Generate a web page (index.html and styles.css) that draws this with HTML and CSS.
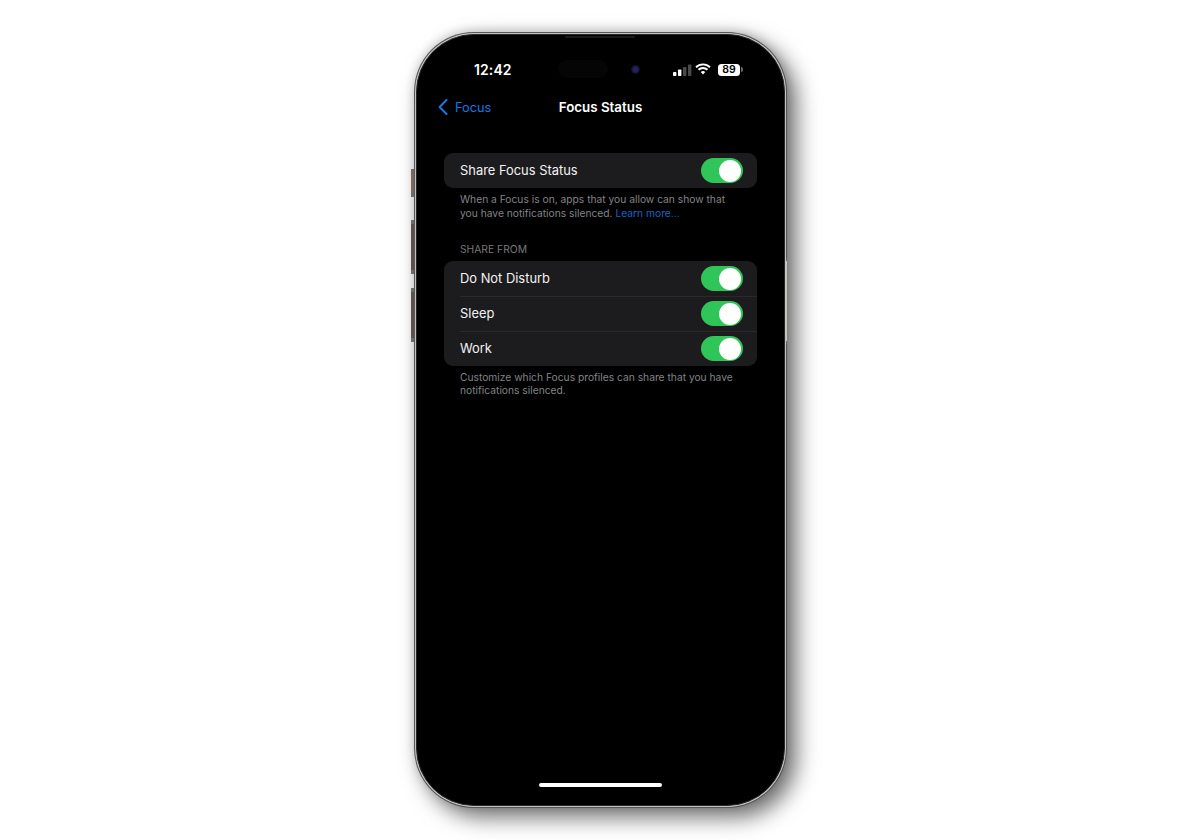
FILE: index.html
```html
<!DOCTYPE html>
<html lang="en">
<head>
<meta charset="utf-8">
<title>Focus Status</title>
<link rel="stylesheet" href="styles.css">
</head>
<body>
<div class="phone">
  <span class="btn btn-mute"></span>
  <span class="btn btn-up"></span>
  <span class="btn btn-down"></span>
  <span class="btn btn-power"></span>
  <div class="bezel">
    <div class="screen">
      <span class="speaker"></span>
      <div class="status">
        <span class="time">12:42</span>
        <div class="island"><span class="pill"></span><span class="cam"></span></div>
        <div class="indicators">
          <svg class="signal" width="19" height="12" viewBox="0 0 19 12"><rect x="0" y="8" width="3.4" height="4" rx="0.8" fill="#fff"/><rect x="5" y="5.5" width="3.4" height="6.5" rx="0.8" fill="#fff"/><rect x="10" y="3" width="3.4" height="9" rx="0.8" fill="#4a4a4c"/><rect x="15" y="0.5" width="3.4" height="11.5" rx="0.8" fill="#4a4a4c"/></svg>
          <svg class="wifi" width="16" height="12" viewBox="0 0 16 12"><path d="M1 4.2a10 10 0 0 1 14 0M3.5 6.8a6.4 6.4 0 0 1 9 0" fill="none" stroke="#fff" stroke-width="1.9"/><path d="M8 11.6 5.7 9.1a3.2 3.2 0 0 1 4.6 0z" fill="#fff"/></svg>
          <div class="battery"><span class="level">89</span><span class="nub"></span></div>
        </div>
      </div>
      <div class="nav">
        <div class="back">
          <svg width="10" height="16" viewBox="0 0 10 16"><path d="M8.5 1 1.6 8l6.9 7" fill="none" stroke="#1c74e0" stroke-width="2" stroke-linecap="round" stroke-linejoin="round"/></svg>
          <span>Focus</span>
        </div>
        <div class="title">Focus Status</div>
      </div>
      <div class="content">
        <div class="card">
          <div class="row"><span>Share Focus Status</span><span class="toggle"><i></i></span></div>
        </div>
        <p class="note">When a Focus is on, apps that you allow can show that you have notifications silenced. <span class="link">Learn more...</span></p>
        <div class="section">SHARE FROM</div>
        <div class="card">
          <div class="row"><span>Do Not Disturb</span><span class="toggle"><i></i></span></div>
          <div class="row"><span>Sleep</span><span class="toggle"><i></i></span></div>
          <div class="row"><span>Work</span><span class="toggle"><i></i></span></div>
        </div>
        <p class="note note-low">Customize which Focus profiles can share that you have notifications silenced.</p>
      </div>
      <div class="home"></div>
    </div>
  </div>
</div>
</body>
</html>
```
FILE: styles.css
```css
* { box-sizing: border-box; }
html, body { margin: 0; height: 840px; overflow: hidden; background: #fff; }
body {
  display: flex;
  justify-content: center;
  padding-top: 32px;
  font-family: Inter, "Liberation Sans", sans-serif;
}
.phone {
  position: relative;
  width: 373px;
  height: 776px;
  margin-left: 1px;
  padding: 1px;
  border-radius: 60px;
  background: #555;
  box-shadow: 9px 9px 22px rgba(0,0,0,.58), 0 -2px 10px rgba(0,0,0,.14);
}
.btn {
  position: absolute;
  width: 3px;
  background: #5e514c;
  border-top: 4px solid #6b6b6b;
  border-bottom: 4px solid #6b6b6b;
}
.btn-mute { left: -3px; top: 137px; height: 28px; background: #7b6a5c; }
.btn-up { left: -3px; top: 188px; height: 54px; }
.btn-down { left: -3px; top: 256px; height: 54px; }
.btn-power { right: 0; top: 226px; width: 1px; height: 86px; border-width: 3px 0; background: #c8c3b4; }
.bezel {
  height: 100%;
  padding: 1px;
  border-radius: 59px;
  background: #c4c4c4;
}
.screen {
  display: flex;
  flex-direction: column;
  position: relative;
  height: 100%;
  border-radius: 58px;
  border: 1px solid #262626;
  background: #000;
  color: #fff;
  overflow: hidden;
}
.speaker {
  position: absolute;
  left: 148px;
  top: 1px;
  width: 70px;
  height: 2px;
  border-radius: 1px;
  background: #1a1a1a;
}
.status {
  display: flex;
  align-items: center;
  height: 22px;
  margin-top: 23px;
  padding-left: 57px;
}
.time { width: 84px; font-size: 14px; font-weight: 600; letter-spacing: .1px; }
.island { display: flex; align-items: center; gap: 23px; }
.pill { width: 50px; height: 18px; border-radius: 9px; background: #050505; }
.cam {
  width: 9px;
  height: 9px;
  border-radius: 50%;
  background: radial-gradient(circle, #23235a 0 35%, #101030 60%, #060612 100%);
}
.indicators { display: flex; align-items: center; margin-left: 33px; }
.signal { margin-top: 1px; }
.wifi { margin-left: 3px; }
.battery {
  display: flex;
  align-items: center;
  margin-top: 1px;
  margin-left: 7px;
}
.level {
  width: 22px;
  height: 12px;
  border-radius: 3.5px;
  background: #fff;
  color: #000;
  font-size: 10.5px;
  font-weight: 600;
  line-height: 12px;
  text-align: center;
}
.nub { width: 2px; height: 5px; margin-left: 1px; border-radius: 0 2px 2px 0; background: #6a6a6a; }
.nav {
  position: relative;
  display: flex;
  justify-content: center;
  align-items: center;
  height: 20px;
  margin-top: 17px;
}
.back {
  position: absolute;
  left: 21px;
  top: 0;
  display: flex;
  align-items: center;
  gap: 7px;
  height: 20px;
  color: #1c74e0;
  font-size: 12.8px;
}
.title { font-size: 13.35px; font-weight: 600; }
.content { padding: 36px 27px 0; }
.card { border-radius: 9px; background: #1c1c1e; }
.row {
  position: relative;
  display: flex;
  justify-content: space-between;
  align-items: center;
  height: 35px;
  padding: 0 14px 0 16px;
  font-size: 12.9px;
  color: #f2f2f2;
}
.row + .row::before {
  content: "";
  position: absolute;
  left: 16px;
  right: 0;
  top: 0;
  height: 1px;
  background: #2a2a2c;
}
.toggle {
  display: flex;
  justify-content: flex-end;
  align-items: center;
  width: 42px;
  height: 25px;
  padding-right: 2px;
  border-radius: 13px;
  background: #30c558;
}
.toggle i {
  display: block;
  width: 22px;
  height: 22px;
  border-radius: 50%;
  background: #fff;
}
.note {
  margin: 4px 0 0;
  padding: 0 16px;
  font-size: 10.25px;
  line-height: 14px;
  color: #838387;
}
.note-low { line-height: 13px; margin-top: 5px; }
.link { color: #1467c0; }
.section {
  margin-top: 22px;
  padding: 0 16px;
  font-size: 10.3px;
  line-height: 14px;
  color: #78787c;
}
.section + .card { margin-top: 5px; }
.home {
  position: absolute;
  left: 122px;
  bottom: 18px;
  width: 123px;
  height: 4px;
  border-radius: 2px;
  background: #fff;
}
```
